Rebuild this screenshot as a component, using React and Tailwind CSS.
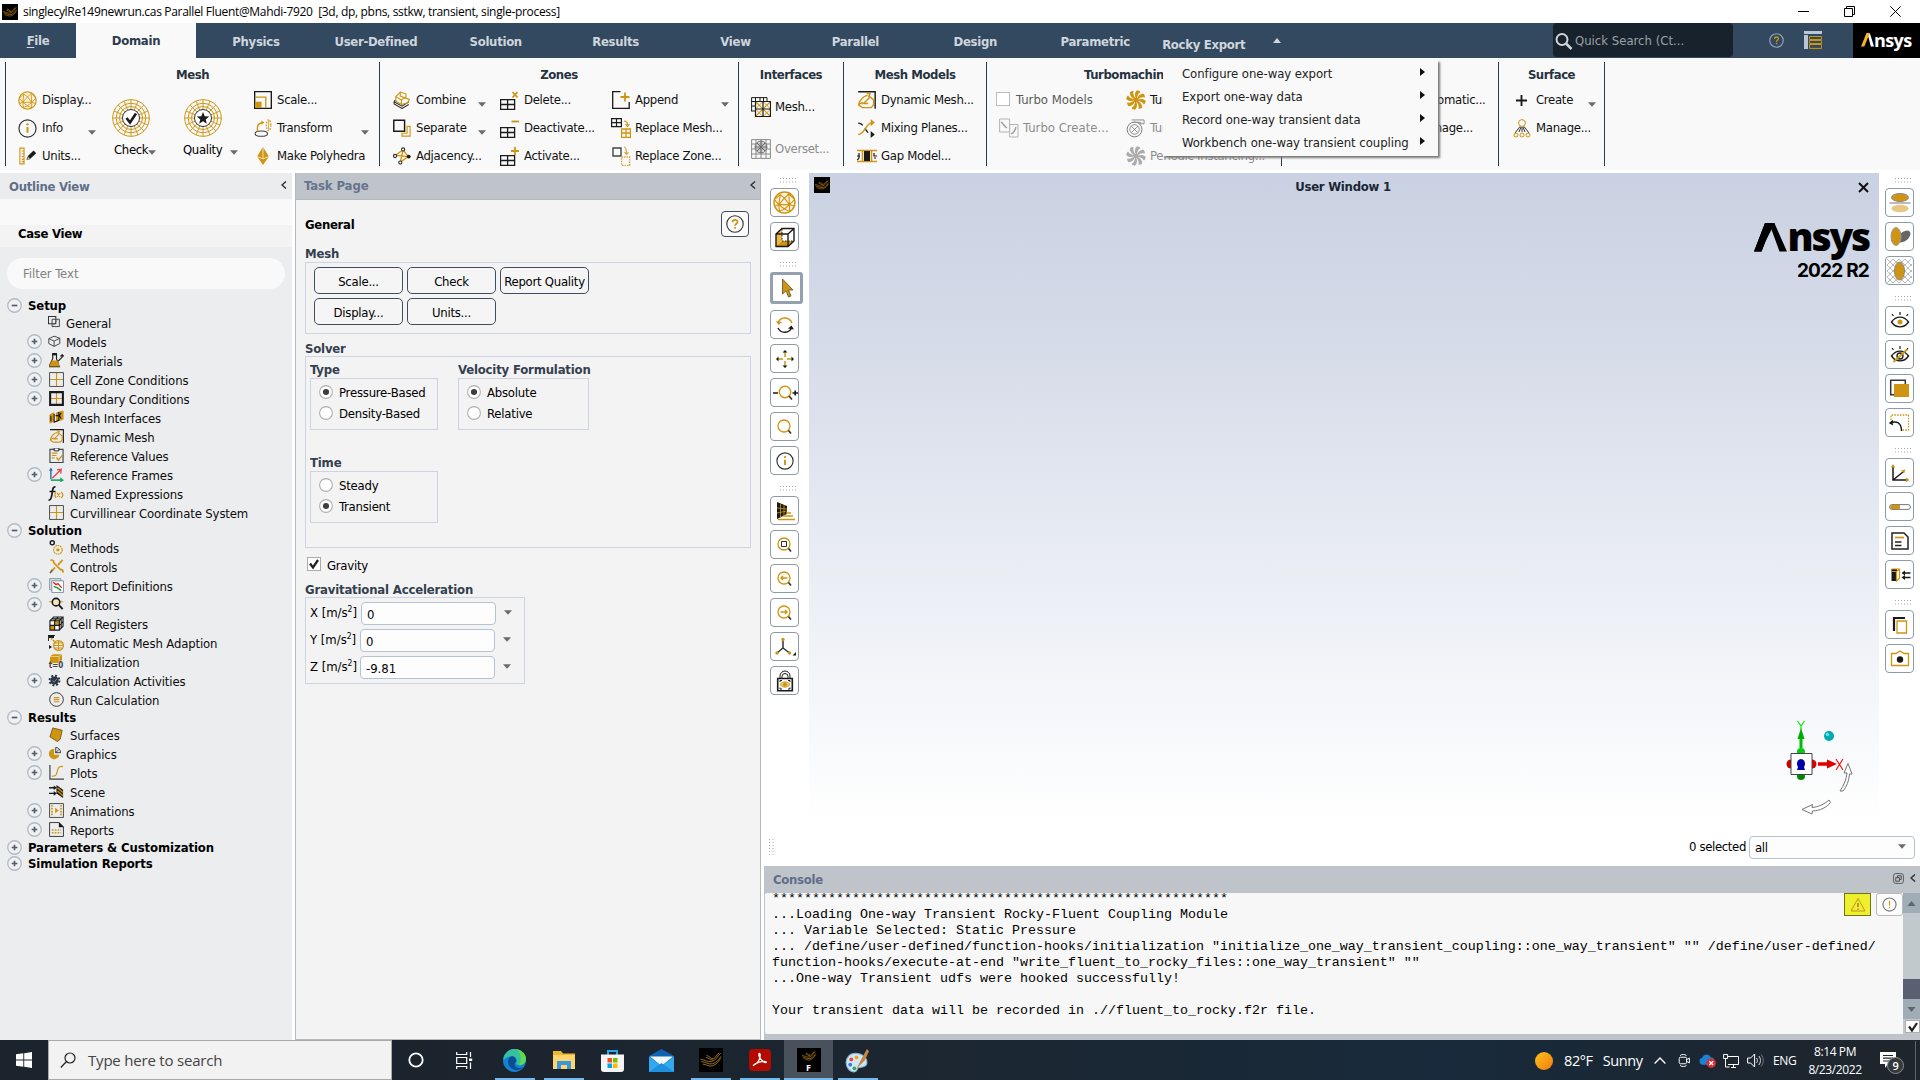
import React from 'react';

const G = '#cf9411';
const K = '#1a1a1a';
const TAHOMA = "font-['DejaVu_Sans_Condensed','DejaVu_Sans',sans-serif]";

function S({ w = 16, h = w, vb = '0 0 16 16', className = '', children }) {
  return (
    <svg width={w} height={h} viewBox={vb} fill="none" className={'shrink-0 ' + className}>
      {children}
    </svg>
  );
}

function Caret({ className = '' }) {
  return (
    <S w={8} h={5} vb="0 0 8 5" className={className}>
      <path d="M0 .3h8L4 4.8z" fill="#6b6b6b" />
    </S>
  );
}

function Swirl({ w = 16, color = '#c58c18' }) {
  return (
    <S w={w} h={w}>
      <rect width="16" height="16" fill="#000" />
      <path d="M1 7.500c3 .2 4.500 2.200 7.500 1.500S12.500 5 14.500 3.500M1.500 9c3 .2 4.500 2.200 7.500 1.500s4.500-3.500 5.800-5M2.500 10.700c2.500.2 4 1.900 6.500 1.200s4.500-3.500 5.500-5M5 5c2 .2 3 2.500 4.500 2.200s2.500-3 4-4M4.500 6.200c2 .3 3 2 4.700 1.700" stroke={color} strokeWidth=".6" />
    </S>
  );
}

/* ---------- ribbon icons ---------- */
const Ball = ({ w = 19 }) => (
  <S w={w}>
    <circle cx="8" cy="8" r="7.300" stroke={G} strokeWidth="1" fill="#fbf3df" />
    <path d="M1 6l4-3.500 3 2.500 3-3 4 4M1 6l3 3.500L8 5l3.500 4.500L15 6M1.500 10.500L4 9.500l4 3 3.500-3 3 1M4 9.500L4.500 14 8 12.500l3.500 1.700V9.500H4zM5 2.500L4 9.500M11 2l.5 7.500" stroke={G} strokeWidth=".75" />
  </S>
);
const Info = ({ w = 19 }) => (
  <S w={w}>
    <circle cx="8" cy="8" r="7.200" stroke="#333" strokeWidth="1" />
    <path d="M8 6.800v4.800" stroke={G} strokeWidth="1.700" />
    <circle cx="8" cy="4.500" r="1" fill={G} />
  </S>
);
const Units = () => (
  <S w={18}>
    <path d="M.8 1h3.700v14H.8zM2.500 3.500h2M2.500 6h2M2.500 8.500h2M2.500 11h2M2.500 13h2" stroke={G} />
    <path d="M7.500 10.500l.8-3L13 3.200l2.300 2.300-4.800 4.600z" fill={K} />
    <path d="M7 11l3-.5-2-2z" stroke={K} fill="#fff" strokeWidth=".6" />
  </S>
);
const Wheel = ({ kind }) => (
  <S w={38} vb="0 0 38 38">
    <g stroke={G}>
      <circle cx="19" cy="19" r="18.300" />
      <circle cx="19" cy="19" r="14.800" />
      <circle cx="19" cy="19" r="11.500" />
      <path d="M19 .5v37M.5 19h37M6 6l26 26M32 6L6 32M12 2l14 34M26 2L12 36M2 12l34 14M2 26l34-14" strokeWidth=".9" />
    </g>
    <circle cx="19" cy="19" r="8.500" fill="#fff" stroke="#333" />
    {kind === 'check' ? (
      <path d="M14.500 19l3.500 4.500 6-9" stroke={K} strokeWidth="2.600" />
    ) : (
      <path d="M19 13l1.700 4.300 4.500.2-3.500 2.900 1.200 4.400L19 22.300l-3.900 2.500 1.200-4.400-3.500-2.900 4.500-.2z" fill={K} />
    )}
  </S>
);
const Scale = () => (
  <S w={18}>
    <path d="M.6.6h14.800v14.800H.6z" stroke={K} strokeWidth="1.200" />
    <path d="M1.200 5.500h9.300v9.500" stroke={G} strokeWidth="1.200" />
    <path d="M1.200 9.500h5.500v5.500H1.200z" fill={G} />
  </S>
);
const Transform = () => (
  <S w={18}>
    <ellipse cx="6.500" cy="13" rx="5.500" ry="2.300" stroke="#444" />
    <path d="M3 11V8.500C3 5 4.500 3.500 7.500 3.300" stroke={G} strokeWidth="1.200" />
    <path d="M6.500 1.300l2.800 1.900-2.600 2z" fill={G} />
    <ellipse cx="13" cy="5.500" rx="2" ry="4.800" stroke={G} strokeDasharray="1.500 1" />
    <path d="M13 1v9" stroke={G} strokeWidth=".7" />
  </S>
);
const Poly = () => (
  <S w={18}>
    <path d="M8 0l5.300 8.500L8 16 2.700 8.500z" fill={G} />
    <path d="M8 0v10.500M2.700 8.500L8 10.500l5.300-2" stroke="#fff" strokeWidth=".6" />
  </S>
);
const Combine = () => (
  <S w={18}>
    <path d="M1 9v2.500L8 15.500l6-3.500M1 9l2-1M1 9.500l7 4 6-4" stroke="#333" />
    <path d="M2.500 5v4l5 3V8zM2.500 5l4-4 5 1.500V6.500l3 1-1.500 3-5.500 1.500M7.500 8l4-3M7.500 8l-5-3M6.500 1v3.500l5 2" stroke={G} fill="#fff" fillOpacity=".6" />
  </S>
);
const Separate = () => (
  <S w={18}>
    <path d="M.7 1.200h9.600v9.600H.7z" stroke={K} strokeWidth="1.300" />
    <path d="M12.500 6.500h2.700v8.700H8v-2.500h4.500z" stroke={G} />
  </S>
);
const Adjacency = () => (
  <S w={18}>
    <path d="M9 2.500L6.500 13.500M2 7.500l11.500 1M9 2.500l4.500 6-7 5M2 7.500l7-5" stroke={G} strokeWidth="1.200" />
    <circle cx="9" cy="2.200" r="1.400" stroke="#333" fill="#fff" />
    <circle cx="1.800" cy="8" r="1.400" stroke="#333" fill="#fff" />
    <circle cx="6.500" cy="13.800" r="1.400" stroke="#333" fill="#fff" />
    <circle cx="14" cy="8.500" r="1.700" fill={K} />
  </S>
);
const ZoneGrid = ({ kind }) => (
  <S w={19} vb="0 0 19 19">
    <path d="M.6 8.600h14v9.800h-14zM7.600 8.600v9.800M.6 13.500h14" stroke={K} strokeWidth="1.300" />
    {kind === 'x' && <path d="M12.500 1l5 5.500M17.500 1l-5 5.500" stroke={G} strokeWidth="1.800" />}
    {kind === '-' && <path d="M11.500 2.500h7.500" stroke={G} strokeWidth="1.800" />}
    {kind === '+' && <path d="M11 4h8M15 0v8" stroke={G} strokeWidth="1.800" />}
  </S>
);
const Append = () => (
  <S w={18} vb="0 0 18 18">
    <path d="M8.500.7H.7v16.600h16.500V11" stroke={K} strokeWidth="1.300" />
    <path d="M13 1.500v9M8.500 6h9" stroke={G} strokeWidth="1.800" />
  </S>
);
const ReplaceMesh = () => (
  <S w={20} vb="0 0 20 20">
    <path d="M.6.6h9.800v8H.6zM5.500.6v8M.6 4.600h9.800" stroke={K} strokeWidth="1.200" />
    <path d="M10.600 11h8.800v8.400h-8.800zM15 11v8.400M10.600 15h8.800" stroke={G} strokeWidth="1.300" />
    <path d="M13 3c2.500 0 3.500 1.500 3.500 4M14.500 6l2 2.500 2-2.500" stroke={G} strokeWidth="1.200" />
  </S>
);
const ReplaceZone = () => (
  <S w={20} vb="0 0 20 20" className="opacity-80">
    <path d="M2 2h8v8H2z" stroke={K} strokeWidth="1.400" />
    <path d="M10.600 11h8v8.400h-8z" stroke={G} strokeWidth="1.500" strokeDasharray="1.500 1" />
    <path d="M13 1c2 0 2.500 1.500 2.500 7M13.500 6l2 2.500 2-2.500" stroke={G} strokeWidth="1.200" />
  </S>
);
const IfMesh = () => (
  <S w={20} vb="0 0 20 20">
    <path d="M.6 14V.6H16V4M.6 4.500H4M.6 9H4M4.500.6V4M9 .6V4M12.500.6V4M0 14h4" stroke={K} />
    <path d="M4.500 4.500l15 15M19.500 4.500l-15 15" stroke={G} strokeWidth="1.200" />
    <path d="M4.500 12L12 4.500l7.500 7.500-7.500 7.500z" stroke={G} strokeWidth=".9" />
    <path d="M4.500 4.500h15v15h-15zM12 4.500v15M4.500 12h15" stroke={K} strokeWidth="1.200" />
  </S>
);
const Overset = () => (
  <S w={20} vb="0 0 20 20">
    <path d="M.6.6h18.800v18.800H.6zM5 .6v19M10 .6v19M15 .6v19M.6 5h19M.6 10h19M.6 15h19" stroke="#8a8a8a" />
    <circle cx="10" cy="8" r="6" stroke="#777" fill="#bbb" fillOpacity=".6" />
    <path d="M4 8h12M10 2v12M6 4l8 8M14 4l-8 8" stroke="#666" />
  </S>
);
const Dynamic = ({ w = 19 }) => (
  <S w={w}>
    <path d="M1 .7h14.300V15" stroke={K} strokeWidth="1.200" />
    <path d="M1.500 11c1-3.500 3-6 7.500-7.500M8 1.500l3 1-1.500 2.700M1 11.500L4.500 14H12l2-2.500V7.500L11 5 5.500 10.500h4M1 11.500l4-2" stroke={G} strokeWidth="1.200" />
  </S>
);
const Mixing = () => (
  <S w={19}>
    <path d="M1 3.500c6 0 6 9.500 12 9.500" stroke={K} strokeWidth="1.100" strokeDasharray="4.500 3" />
    <path d="M1 13c6 0 6-9.800 12-9.800" stroke={G} strokeWidth="1.200" />
    <path d="M11.500 0l3.500 3-3.500 3z" fill={G} />
    <path d="M11.500 10l3.500 3-3.500 3z" fill={K} />
  </S>
);
const Gap = () => (
  <S w={20} h={14} vb="0 0 20 14">
    <path d="M0 1.500h20M0 12.500h20" stroke={G} strokeWidth="1.600" />
    <path d="M7 2h6v10H7z" fill={K} />
    <path d="M5.500 2v10M14.500 2v10" stroke={G} strokeWidth="1.500" />
    <path d="M0 7h3M2 4v5c0 1-2 2-2 2M20 7h-3V4M17 9h2" stroke={K} strokeWidth="1.200" />
  </S>
);
const TurboCreate = () => (
  <S w={20} vb="0 0 20 20">
    <path d="M.6 1h10v13H.6zM10.600 6.500H19V19h-8.400z" stroke="#b3b3b3" />
    <path d="M2 4c2 1 2 3 6 6M12 16c3-1 4-3 5-7" stroke="#9a9a9a" strokeWidth="1.300" />
  </S>
);
const Fan = ({ color = G }) => (
  <S w={20} vb="0 0 20 20">
    {[0, 45, 90, 135, 180, 225, 270, 315].map((a) => (
      <path key={a} d="M10 8.500C8.500 6 8.500 2.500 11 .3c2 .2 3 1 3.500 1.700C12 3.500 11.200 5.500 11 8.500z" fill={color} transform={`rotate(${a} 10 10)`} />
    ))}
    <circle cx="10" cy="10" r="2.200" fill={color} />
  </S>
);
const TurboWheel = () => (
  <S w={19} vb="0 0 20 20">
    <circle cx="9" cy="11" r="7.800" stroke="#777" />
    <circle cx="9" cy="11" r="5" stroke="#888" />
    <path d="M6 1h13v4h-5M8 3.500h8M5.500 7.500l7 7M12.500 7.500l-7 7" stroke="#888" />
  </S>
);
const SurfManage = () => (
  <S w={18} h={19} vb="0 0 18 19">
    <circle cx="9" cy="4" r="3.400" stroke={G} />
    <path d="M9 8v5M7 7.500L2 14M11 7.500l5 6.500M8 8l-2 5M10 8l2 5" stroke={K} strokeWidth=".9" />
    <circle cx="3" cy="16" r="2" stroke={G} />
    <circle cx="9" cy="16" r="2" stroke={G} />
    <circle cx="15" cy="16" r="2" stroke={G} />
  </S>
);

function Item({ icon, label, caret, dim, gap = 'ml-[5px]', box = 'w-[19px]' }) {
  return (
    <div className={'flex h-7 items-center text-[13px] tracking-[-0.3px] whitespace-nowrap ' + (dim ? 'text-[#8c8c8c]' : 'text-[#111]')}>
      {icon && <span className={'flex shrink-0 justify-center ' + box}>{icon}</span>}
      <span className={gap}>{label}</span>
      {caret && <Caret className="mt-2 ml-auto" />}
    </div>
  );
}

function Group({ title, width, children }) {
  return (
    <section className={'mt-1 h-[104px] shrink-0 border-r border-[#2c3a4a] ' + width}>
      <h3 className="h-[24px] pt-[3px] text-center text-[13px] leading-[19px] font-bold tracking-[-0.45px] whitespace-nowrap text-[#26323f]">{title}</h3>
      <div className="flex">{children}</div>
    </section>
  );
}

function Ribbon() {
  return (
    <div className="relative flex h-[112px] bg-[#f9f9f9] pl-[5px]">
      <div className="mt-1 h-[104px] w-px bg-[#2c3a4a]" />
      <Group title="Mesh" width="w-[374px]">
        <div className="ml-3 w-[78px]">
          <Item icon={<Ball />} label="Display..." />
          <Item icon={<Info />} label="Info" caret />
          <Item icon={<Units />} label="Units..." />
        </div>
        <div className="ml-[2px] w-[66px] pt-[13px] text-[13px] tracking-[-0.35px]">
          <div className="flex justify-center"><Wheel kind="check" /></div>
          <div className="mt-[3px] flex items-center pl-4 leading-5"><span>Check</span><Caret className="mt-1" /></div>
        </div>
        <div className="w-[78px] pt-[13px] text-[13px] tracking-[-0.35px]">
          <div className="flex justify-center"><Wheel kind="star" /></div>
          <div className="mt-[3px] flex items-center pr-1 pl-[19px] leading-5"><span>Quality</span><Caret className="mt-1 ml-auto" /></div>
        </div>
        <div className="ml-[11px] w-[116px]">
          <Item icon={<Scale />} label="Scale..." />
          <Item icon={<Transform />} label="Transform" caret />
          <Item icon={<Poly />} label="Make Polyhedra" />
        </div>
      </Group>
      <Group title="Zones" width="w-[359px]">
        <div className="ml-[12px] w-[94px]">
          <Item icon={<Combine />} label="Combine" caret />
          <Item icon={<Separate />} label="Separate" caret />
          <Item icon={<Adjacency />} label="Adjacency..." />
        </div>
        <div className="ml-[14px] w-[100px]">
          <Item icon={<ZoneGrid kind="x" />} label="Delete..." />
          <Item icon={<ZoneGrid kind="-" />} label="Deactivate..." />
          <Item icon={<ZoneGrid kind="+" />} label="Activate..." />
        </div>
        <div className="ml-[11px] w-[118px]">
          <Item icon={<Append />} label="Append" caret />
          <Item icon={<ReplaceMesh />} label="Replace Mesh..." />
          <Item icon={<ReplaceZone />} label="Replace Zone..." />
        </div>
      </Group>
      <Group title="Interfaces" width="w-[105px]">
        <div className="ml-3 pt-[7px]">
          <Item icon={<IfMesh />} label="Mesh..." />
          <div className="h-[14px]" />
          <Item icon={<Overset />} label="Overset..." dim />
        </div>
      </Group>
      <Group title="Mesh Models" width="w-[143px]">
        <div className="ml-[13px]">
          <Item icon={<Dynamic />} label="Dynamic Mesh..." />
          <Item icon={<Mixing />} label="Mixing Planes..." />
          <Item icon={<Gap />} label="Gap Model..." />
        </div>
      </Group>
      <Group title="Turbomachinery" width="w-[295px]">
        <div className="ml-[9px] w-[130px]">
          <div className="flex h-7 items-center text-[13px] text-[#5a5a5a]">
            <span className="mb-[2px] h-[14px] w-[14px] border border-[#bcbcbc] bg-white" />
            <span className="ml-[6px]">Turbo Models</span>
          </div>
          <div className="flex h-7 items-center pl-[3px] text-[13px] text-[#8c8c8c]"><TurboCreate /><span className="ml-1">Turbo Create...</span></div>
        </div>
        <div>
          <Item icon={<Fan />} label="Turbo Topology..." />
          <Item icon={<TurboWheel />} label="Turbo Query..." dim />
          <Item icon={<Fan color="#ababab" />} label="Periodic Instancing..." dim />
        </div>
      </Group>
      <Group title="Adapt" width="w-[217px]">
        <div className="ml-[112px]">
          <Item icon={<Ball />} label="Automatic..." />
          <Item icon={<Ball />} label="Manage..." />
        </div>
      </Group>
      <Group title="Surface" width="w-[106px]">
        <div className="ml-[13px] w-[84px]">
          <Item icon={<S w={11} vb="0 0 10 10"><path d="M5 0v10M0 5h10" stroke={K} strokeWidth="1.700" /></S>} label="Create" caret />
          <Item icon={<SurfManage />} label="Manage..." />
        </div>
      </Group>
      <div className="absolute top-[2px] left-[1163px] z-10 flex h-[96px] w-[275px] flex-col bg-[#f9f9f9] pt-[2px] shadow-[2px_2px_2px_#777] [clip-path:inset(0_-6px_-6px_0)]">
        {['Configure one-way export', 'Export one-way data', 'Record one-way transient data', 'Workbench one-way transient coupling'].map((t) => (
          <div key={t} className="flex h-[23px] items-center pr-[13px] pl-[19px] text-[13px] tracking-[-0.05px] whitespace-nowrap text-[#222]">
            {t}
            <S w={5} h={8} vb="0 0 5 8" className="mb-[3px] ml-auto"><path d="M0 0l5 4-5 4z" fill="#111" /></S>
          </div>
        ))}
      </div>
    </div>
  );
}

/* ---------- header ---------- */
function Header() {
  const tabs = ['Physics', 'User-Defined', 'Solution', 'Results', 'View', 'Parallel', 'Design', 'Parametric'];
  return (
    <>
      <div className="flex h-[23px] items-center bg-white pl-[2px] font-['Open_Sans',sans-serif] text-[12px] text-black">
        <Swirl />
        <span className="ml-[5px] tracking-[-0.32px] whitespace-pre">{'singlecylRe149newrun.cas Parallel Fluent@Mahdi-7920  [3d, dp, pbns, sstkw, transient, single-process]'}</span>
        <div className="ml-auto flex items-center gap-[35px] pr-[19px]">
          <S w={11} vb="0 0 11 11"><path d="M0 5.500h11" stroke="#000" /></S>
          <S w={11} vb="0 0 11 11"><path d="M.5 2.500h8v8h-8zM2.500 2.500v-2h8v8h-2" stroke="#000" /></S>
          <S w={11} vb="0 0 11 11"><path d="M.3.300l10.400 10.400M10.700.3L.3 10.700" stroke="#000" /></S>
        </div>
      </div>
      <div className="flex h-[35px] bg-[#334960] text-[13px] font-bold tracking-[-0.3px] text-[#cfd5dc]">
        <div className="flex w-[76px] items-center justify-center pt-[1px]"><span className="underline-offset-2"><u>F</u>ile</span></div>
        <div className="flex w-[120px] items-center justify-center bg-[#f9f9f9] pt-[1px] text-[#2b3b4c]">Domain</div>
        {tabs.map((t) => (
          <div key={t} className="flex w-[119.9px] items-center justify-center pt-[3px]">{t}</div>
        ))}
        <div className="flex w-[110px] items-center pt-[8px] pl-[7px] whitespace-nowrap">Rocky Export</div>
        <S w={8} h={5} vb="0 0 8 5" className="mt-[15px] ml-[8px]"><path d="M0 5h8L4 0z" fill="#cfd5dc" /></S>
        <div className="ml-auto flex h-[34px] w-[180px] items-center rounded-[4px] bg-[#18222d] pt-px pl-[2px] text-[13px] font-normal tracking-normal text-[#9aa1a8]">
          <S w={18} vb="0 0 18 18"><circle cx="7" cy="7.500" r="5.500" stroke="#cfd5dc" strokeWidth="2" /><path d="M11 11.500l5.500 5.500" stroke="#cfd5dc" strokeWidth="2.500" /></S>
          <span className="ml-[2px]">Quick Search (Ct...</span>
        </div>
        <S w={15} className="mt-[10px] ml-[36px]"><circle cx="8" cy="8" r="7.200" stroke="#8fa0b2" strokeWidth="1.300" /><path d="M6 6.300c0-2.800 4-2.600 4-.2 0 1.600-2 1.500-2 3.200M8 10.500v1.500" stroke={G} strokeWidth="1.400" /></S>
        <S w={18} vb="0 0 18 18" className="mt-[8px] ml-[20px]"><path d="M0 0h18v3H0zM0 4h4v14H0z" fill="#b9c6d3" /><path d="M5.600 5.500h12v3h-12zM5.600 9.500h12v3h-12zM5.600 13.500h12v3.900h-12z" stroke={G} /></S>
        <div className="ml-[31px] flex w-[67px] items-center bg-black pl-[8px] font-['Open_Sans',sans-serif] text-[18px] leading-none tracking-[-0.6px] text-white">
          <S w={13} h={14} vb="0 0 13 14" className="mb-[1px]"><path d="M0 13.500L5.500 0h3.300L3.300 13.500z" fill="#f9b31c" /><path d="M7.300 3.500L8.800 0l4.200 13.500H9.800z" fill="#fff" /></S>
          <span className="mb-[2px]">nsys</span>
        </div>
      </div>
    </>
  );
}

/* ---------- outline tree ---------- */
const g = (children, w = 15) => <S w={w}>{children}</S>;
const TREE_ICONS = {
  General: g(<><path d="M.6.600h9v9h-9z" stroke="#333" strokeWidth="1.300" /><path d="M5 4h9v9H5z" stroke="#444" strokeWidth="1.200" /><path d="M6.500 11.500L11 5.500" stroke="#555" /></>, 13),
  Models: g(<><path d="M1 4.500L7.500 1.500 14.500 4v6.500L7.500 14 1 10.500zM1 4.500l6.500 3L14.500 4M7.500 7.500V14" stroke="#444" strokeWidth="1.200" /></>, 13),
  Materials: g(<><path d="M4 1h4v5l3 8.500H0L4 6z" stroke={K} strokeWidth="1.200" /><path d="M3 8h6l2.500 6.500H0z" fill={G} /><path d="M3.500 0h5v2.500h-5z" fill={K} /><path d="M9.500 9l4-4M14 1v4M12 3h4" stroke={K} strokeWidth="1.300" /></>),
  Cell: g(<><path d="M8 1v14M1 8h14" stroke={G} strokeWidth="1.200" /><path d="M.6.600h14.800v14.800H.6z" stroke="#444" /></>),
  Boundary: g(<><path d="M8 1v14M1 8h14" stroke={G} strokeWidth="1.200" /><path d="M1.200 1.200h13.600v13.600H1.200z" stroke={K} strokeWidth="2.200" /></>),
  Interfaces: g(<><path d="M1 5l4-2v9l-4 2zM8 3l7-2v9l-7 2z" fill={G} stroke={G} /><path d="M2 6v6M5.500 4v9l5-2V2M7 6h3M13 3l-2 3 2 3" stroke={K} strokeWidth="1.200" /></>),
  Dynamic: <Dynamic w={15} />,
  RefValues: g(<><path d="M1 1.500h14v14H1z" stroke="#444" strokeWidth="1.200" /><path d="M5.500 0h5v3h-5z" fill="#fff" stroke={K} /><path d="M3 5.500h6M3 8h5M3 10.500h3M8 10l2 3 4-5" stroke={G} strokeWidth="1.300" /></>),
  Frames: g(<><path d="M2 2v11" stroke="#1d6fb8" strokeWidth="1.500" /><path d="M0 4l2-3.500L4 4z" fill="#1d6fb8" /><path d="M2 14h11" stroke="#18a558" strokeWidth="1.700" /><path d="M12 11l4 3-4 2.500z" fill="#18a558" /><path d="M3.500 12L12 3.500M8.500 3l4.500-.5-.5 4.500" stroke="#e8424b" strokeWidth="1.400" /></>),
  Expr: g(<><path d="M7.500 1C5 .5 4.800 3 4.300 6S3.500 14.500.5 14M1.500 5.500h6" stroke={K} strokeWidth="1.700" /><path d="M8 6c-1.500 2-1.500 4 0 6M9 7l3 4M12 7l-3 4M13 6c2.500 2 2.500 4 0 6" stroke={G} strokeWidth="1.200" /></>, 16),
  Methods: g(<><circle cx="3.500" cy="3" r="2.200" stroke={K} strokeWidth="1.500" /><circle cx="9.500" cy="10.500" r="4.600" stroke={G} strokeWidth="1.200" strokeDasharray="2 .6" /><circle cx="9.500" cy="10.500" r="1.800" fill={G} /></>),
  Controls: g(<><path d="M1.500 1.500c2-1 4 0 3.500 2.500l7.500 7.500c2-.5 3 1.500 2 3M14.500 1l-5 5.500M6.500 9L1.500 14.500" stroke={G} strokeWidth="1.800" /><path d="M3.500 11.500L1 15" stroke="#666" strokeWidth="1.500" /></>),
  RepDef: g(<><path d="M.6.600h12v12H.6z" fill="#d4dbe2" stroke="#8899a8" /><path d="M3 3h12.400v12.400H3z" fill="#fff" stroke="#7d8d9c" /><path d="M4.500 4.500l3 2.500 2-1 4 4.500" stroke="#e22" strokeWidth="1.500" /><path d="M5 9l4 1.500 4 3" stroke="#1a9a3a" strokeWidth="1.500" /></>),
  Monitors: g(<><path d="M0 5h16" stroke={G} strokeWidth="1.200" strokeDasharray="3 1" /><circle cx="7.500" cy="5.500" r="4" fill="#f5e6bf" stroke={K} strokeWidth="1.700" /><path d="M10.500 8.500l4 4.500" stroke={K} strokeWidth="2" /></>),
  Registers: g(<><path d="M1 5h10v10H1z" fill={G} /><path d="M1 5h5v5H1zM6 10h5v5H6z" fill="#fff" /><path d="M1 5l4-4h10v10l-4 4H1zM1 5h10v10M11 5l4-4M6 5v10M1 10h10l4-4M3 3h10v10M6 5l4-4" stroke={K} strokeWidth="1.200" /></>),
  Adaption: g(<><path d="M0 0h7M0 0v6M1 2h5" stroke={K} strokeWidth="1.800" /><path d="M3 3l5 5" stroke={G} strokeWidth="1.600" strokeDasharray="2 .8" /><circle cx="10.500" cy="10.500" r="4.900" stroke={G} strokeWidth="1.200" /><path d="M6 10.500h9M10.500 6v9M7 8h7M7 13h7" stroke={G} /><path d="M1 10l3 2-3 2z" fill={K} /></>, 16),
  Init: (
    <span className="flex flex-col items-center">
      <S w={12} h={9} vb="0 0 12 9"><path d="M0 2.500L3 .300h9V6L9 9H0z" fill={G} /><path d="M0 2.500h9V9M9 2.500L12 .3" stroke="#f5e0a8" strokeWidth=".7" /></S>
      <span className="text-[8px] leading-[6px] font-bold tracking-normal text-[#444]">t=0</span>
    </span>
  ),
  CalcAct: g(<><circle cx="8" cy="8" r="5" fill="#2d3742" /><circle cx="8" cy="8" r="6" stroke="#2d3742" strokeWidth="2.500" strokeDasharray="2.400 2.300" /><path d="M5.500 8l2 2 3.500-4" stroke="#8b99a8" /></>, 13),
  Run: g(<><circle cx="8" cy="8" r="7.300" stroke="#333" /><path d="M5 6h6M5 8.200h6M5 10.400h6" stroke={G} strokeWidth="1.300" /></>),
  Surfaces: g(<><path d="M4 1l10 2.500-2 9.500-3 2.500L1 10.500z" fill={G} stroke="#7a5a14" /></>),
  Graphics: g(<><path d="M7.500 2A6.500 6.500 0 1 0 14 9.500H7.500z" fill={G} /><path d="M9.500.5v6.500h6C15.300 3.500 13 .8 9.500.5zM9.500 7l4-4" stroke={K} /></>, 13),
  Plots: g(<><path d="M1 0v15h15" stroke="#444" strokeWidth="1.300" /><path d="M3 12c5 0 5-2 6-6s2-4.500 6-4.500" stroke={G} strokeWidth="1.300" /></>),
  Scene: g(<><path d="M0 4h6M0 10h6" stroke={K} strokeWidth="1.500" /><path d="M5 1.500L8.500 4 5 6.500zM5 7.500L8.500 10 5 12.500z" fill={K} /><path d="M8 1l7 5v9l-7-5z" fill={K} /><path d="M9 4l6 5M9 7.500l6 5" stroke={G} strokeWidth="1.500" /></>),
  Anim: g(<><path d="M.6.600h14.800v14.800H.6z" stroke="#444" /><path d="M3.200 2v12M12.800 2v12" stroke={G} strokeWidth="1.800" strokeDasharray="1.800 1.300" /><path d="M6.500 5l4 3-4 3z" fill={G} /></>),
  Reports: g(<><path d="M.6.600h10l4.800 4.500v10.300H.6z" stroke="#333" /><path d="M10.500 0v5.500H16z" fill={K} /><path d="M3 8.500h10M3 11.500h10" stroke={G} strokeWidth="1.500" strokeDasharray="1.800 1.300" /></>),
};

const TREE = [
  ['-', 'Setup', [
    ['', 'General', 'General', 1], ['+', 'Models', 'Models', 1], ['+', 'Materials', 'Materials'], ['+', 'Cell Zone Conditions', 'Cell'],
    ['+', 'Boundary Conditions', 'Boundary'], ['', 'Mesh Interfaces', 'Interfaces'], ['', 'Dynamic Mesh', 'Dynamic'], ['', 'Reference Values', 'RefValues'],
    ['+', 'Reference Frames', 'Frames'], ['', 'Named Expressions', 'Expr'], ['', 'Curvillinear Coordinate System', 'Cell'],
  ]],
  ['-', 'Solution', [
    ['', 'Methods', 'Methods'], ['', 'Controls', 'Controls'], ['+', 'Report Definitions', 'RepDef'], ['+', 'Monitors', 'Monitors'],
    ['', 'Cell Registers', 'Registers'], ['', 'Automatic Mesh Adaption', 'Adaption'], ['', 'Initialization', 'Init'],
    ['+', 'Calculation Activities', 'CalcAct', 1], ['', 'Run Calculation', 'Run'],
  ]],
  ['-', 'Results', [
    ['', 'Surfaces', 'Surfaces'], ['+', 'Graphics', 'Graphics', 1], ['+', 'Plots', 'Plots'], ['', 'Scene', 'Scene'], ['+', 'Animations', 'Anim'], ['+', 'Reports', 'Reports'],
  ]],
  ['+', 'Parameters & Customization', []],
  ['+', 'Simulation Reports', []],
];

function Toggle({ kind, w = 15 }) {
  if (!kind) return <span className="w-[15px] shrink-0" />;
  return (
    <S w={w}>
      <circle cx="8" cy="8" r="7.200" stroke="#b3bbc4" strokeWidth="1.400" fill="#f0f1f3" />
      <path d={kind === '+' ? 'M8 5v6M5 8h6' : 'M5 8h6'} stroke="#555d6b" strokeWidth="1.800" />
    </S>
  );
}

function Outline() {
  return (
    <aside className="flex w-[292px] shrink-0 flex-col bg-[#ecedef]">
      <div className="flex h-[26px] items-center bg-[#ebeced] pt-px pr-[5px] pl-[9px] text-[13px] font-bold tracking-[-0.28px] text-[#5f6f88]">
        Outline View
        <S w={6} h={8} vb="0 0 6 8" className="mb-[3px] ml-auto"><path d="M5 .5L1 4l4 3.500" stroke="#333" strokeWidth="1.500" /></S>
      </div>
      <div className="h-[26px] bg-[#f9f9f9]" />
      <div className="flex h-[22px] items-center bg-[#f3f3f4] pb-[5px] pl-[18px] text-[13px] font-bold tracking-[-0.3px] text-black">Case View</div>
      <div className="mt-[11px] ml-[7px] flex h-[31px] w-[278px] items-center rounded-full bg-[#f9f9f9] pt-px pl-4 text-[13px] tracking-[-0.05px] text-[#808080]">Filter Text</div>
      <ul className="mt-[8px]">
        {TREE.map(([k, label, kids]) => (
          <li key={label}>
            <div className="flex h-4 items-center pl-[7px] text-[13px] font-bold tracking-[-0.11px] text-black">
              <Toggle kind={k} />
              <span className="mt-[2px] ml-[6px]">{label}</span>
            </div>
            <ul>
              {kids.map(([kk, l, ic, narrow]) => (
                <li key={l} className="flex h-[19px] items-center pl-[27px] text-[13px] tracking-[-0.13px] whitespace-nowrap text-[#0c0c0c]">
                  <Toggle kind={kk} />
                  <span className={'ml-[6px] flex shrink-0 justify-center ' + (narrow ? 'w-[12px]' : 'w-[16px]')}>{TREE_ICONS[ic]}</span>
                  <span className="mt-[2px] ml-[6px]">{l}</span>
                </li>
              ))}
            </ul>
          </li>
        ))}
      </ul>
    </aside>
  );
}

/* ---------- task page ---------- */
const Label = ({ children, className = '' }) => <div className={'text-[13px] leading-4 font-bold tracking-[-0.18px] text-[#33404f] ' + className}>{children}</div>;
const Btn = ({ children }) => (
  <button className="flex h-[27px] w-[89px] items-center justify-center rounded-[5px] border border-[#3f4d5f] bg-[#f5f5f5] pt-[2px] text-[13px] tracking-[-0.25px] whitespace-nowrap text-black">{children}</button>
);
const Radio = ({ on, children }) => (
  <div className="flex h-[21px] items-center text-[13px] tracking-[-0.22px] whitespace-nowrap text-black">
    <S w={14}><circle cx="8" cy="8" r="7.300" fill="#fff" stroke="#adadad" strokeWidth="1.200" />{on && <circle cx="8" cy="8" r="3.500" fill="#3d3d3d" />}</S>
    <span className="mt-[2px] ml-[6px]">{children}</span>
  </div>
);
const RadioBox = ({ width, a, b, sel }) => (
  <div className={'h-[52px] border border-[#cdd3e2] pt-[2px] pl-[8px] ' + width}>
    <Radio on={sel === 0}>{a}</Radio>
    <Radio on={sel === 1}>{b}</Radio>
  </div>
);

function TaskPage() {
  return (
    <main className="ml-[3px] flex w-[466px] shrink-0 flex-col border border-t-0 border-[#b5b9bd] bg-[#f3f3f3]">
      <div className="flex h-[27px] shrink-0 items-center border-b border-[#b2b7bc] bg-[#bfc4cb] pr-[4px] pl-2 text-[13px] font-bold tracking-[-0.1px] text-[#66748c]">
        Task Page
        <S w={6} h={8} vb="0 0 6 8" className="mb-[3px] ml-auto"><path d="M5 .5L1 4l4 3.500" stroke="#333" strokeWidth="1.500" /></S>
      </div>
      <div className="px-[9px]">
        <div className="mt-[11px] flex h-[27px] items-center justify-between pr-[2px] text-[13px] font-bold tracking-[-0.3px] text-black">
          General
          <span className="mb-[2px] flex h-[26px] w-[28px] items-center justify-center rounded-[4px] border border-[#3f4d5f] bg-[#fafafa]">
            <S w={18}><circle cx="8" cy="8" r="7.300" stroke="#333" /><path d="M5.800 6.500c0-3 4.500-2.800 4.500-.3 0 1.700-2.200 1.500-2.200 3.300M8.100 10.700v1.500" stroke={G} strokeWidth="1.500" /></S>
          </span>
        </div>
        <Label className="mt-[8px]">Mesh</Label>
        <div className="flex h-[72px] flex-col gap-1 border border-[#cdd3e2] pt-1 pl-[8px]">
          <div className="flex gap-1"><Btn>Scale...</Btn><Btn>Check</Btn><Btn>Report Quality</Btn></div>
          <div className="flex gap-1"><Btn>Display...</Btn><Btn>Units...</Btn></div>
        </div>
        <Label className="mt-[6px] pt-px leading-[15px]">Solver</Label>
        <div className="h-[192px] border border-[#cdd3e2] pt-[5px] pl-[4px]">
          <div className="flex gap-[20px]">
            <div><Label>Type</Label><RadioBox width="w-[128px]" a="Pressure-Based" b="Density-Based" sel={0} /></div>
            <div><Label className="whitespace-nowrap">Velocity Formulation</Label><RadioBox width="w-[131px]" a="Absolute" b="Relative" sel={0} /></div>
          </div>
          <Label className="mt-[25px]">Time</Label>
          <RadioBox width="w-[128px]" a="Steady" b="Transient" sel={1} />
        </div>
        <div className="mt-[7px] flex h-[18px] items-center pl-[2px] text-[13px] tracking-[-0.25px] text-black">
          <span className="flex h-[14px] w-[14px] items-center justify-center border border-[#ababab] bg-white"><S w={10} vb="0 0 10 10"><path d="M1 4.500l3 4L9 1" stroke="#222" strokeWidth="2.300" /></S></span>
          <span className="mt-[3px] ml-[6px]">Gravity</span>
        </div>
        <Label className="mt-[8px] pt-px leading-[15px]">Gravitational Acceleration</Label>
        <div className="flex h-[87px] w-[220px] flex-col gap-1 border border-[#cdd3e2] pt-1 pl-[4px]">
          {[['X', '0'], ['Y', '0'], ['Z', '-9.81']].map(([a, v]) => (
            <div key={a} className="flex h-[23px] items-center text-[13px] tracking-[-0.02px] text-black">
              <span className={'-mt-[2px] whitespace-nowrap ' + (a === 'X' ? 'w-[51px]' : 'w-[50px]')}>{a} [m/s<sup className="top-[-5px] text-[8.500px] leading-none">2</sup>]</span>
              <span className="flex h-[23px] w-[135px] items-center rounded-[4px] border border-[#b5c2d2] bg-[#fdfdfd] pt-[3px] pl-[5px]">{v}</span>
              <Caret className="mb-[3px] ml-[8px]" />
            </div>
          ))}
        </div>
      </div>
    </main>
  );
}

/* ---------- tool bars ---------- */
const Dots = () => (
  <div className="mt-[11px] mb-[5px] flex pl-[10px] first:mt-[5px]">
    <S w={16} h={5} vb="0 0 16 5"><path d="M0 .5h16M0 4h16" stroke="#a9a9a9" strokeDasharray="1 2" /></S>
  </div>
);
const Tool = ({ children }) => (
  <span className="flex h-[29px] w-[29px] shrink-0 items-center justify-center rounded-[4px] border border-[#8d9aa8] bg-white">{children}</span>
);
const M = (inner) => <S w={22} vb="0 0 22 22">{inner}</S>;
const lens = <><circle cx="10" cy="10" r="6" stroke={G} strokeWidth="1.300" /><path d="M14.500 14.500L17 17.500" stroke="#333" strokeWidth="1.700" /></>;

function LeftTools() {
  return (
    <div className="flex w-[48px] shrink-0 flex-col pl-[9px]">
      <Dots />
      <div className="flex flex-col gap-[5px]">
        <Tool><Ball w={23} /></Tool>
        <Tool>{M(<><path d="M2 8l6-5v12l-6 5z" fill="#f0b84a" /><path d="M2 20l6-5h12l-6 5z" fill={G} /><path d="M8 2.500h12V15H8z" fill="#fff" /><path d="M2 8l6-5.500h12V15l-6 5.500H2zM2 8h12v12.500M14 8l6-5.500" stroke={K} strokeWidth="1.400" /><path d="M8 3v12h12" stroke={K} strokeDasharray="1.500 1.500" /></>)}</Tool>
      </div>
      <Dots />
      <span className="flex h-[32px] w-[33px] shrink-0 items-center justify-center rounded-[3px] border-[3px] border-[#93a1ae] bg-white">
        {M(<path d="M6.500 2v15l3.500-3.200L12.500 20l2.500-1-2.500-6H17z" fill={G} stroke="#6b5a2a" strokeWidth=".9" />)}
      </span>
      <div className="mt-[6px] flex flex-col gap-[5px]">
        <Tool>{M(<><path d="M4 9c2-6.500 11-7 14 0" stroke={G} strokeWidth="1.500" /><path d="M2 7l2.500 4L8 8z" fill={G} /><path d="M4 14c3 6 11 5.500 14-.5" stroke={K} strokeWidth="1.400" /><path d="M20 15.500l-2.500-4L14 14.500z" fill={K} /></>)}</Tool>
        <Tool>{M(<><path d="M11 3v6M11 13v6M3 11h6M13 11h6" stroke={G} strokeWidth="1.500" /><path d="M8.500 4.500L11 2l2.500 2.500zM8.500 17.500L11 20l2.500-2.500zM4.500 8.500L2 11l2.500 2.500zM17.500 8.500L20 11l-2.500 2.500z" fill={K} /></>)}</Tool>
        <Tool><S w={26} h={22} vb="0 0 26 22"><circle cx="13" cy="10" r="5.700" stroke={G} strokeWidth="1.400" /><path d="M17 14l3 3.500" stroke="#333" strokeWidth="1.700" /><path d="M1 11h5M20.500 11H26M23.200 8.500v5" stroke={K} strokeWidth="1.700" /></S></Tool>
        <Tool>{M(lens)}</Tool>
        <Tool><Info w={18} /></Tool>
      </div>
      <Dots />
      <div className="flex flex-col gap-[5px]">
        <Tool>{M(<><path d="M3 2l10 4v8L3 19z" fill={K} /><path d="M3 8l10 1M3 13l10-2M6.500 3.500v14M10 5v11" stroke={G} strokeWidth=".8" /><path d="M12 13h5M9 16h10M4 19.500h17" stroke={G} strokeWidth="1.400" /></>)}</Tool>
        <Tool>{M(<>{lens}<path d="M7.500 7.500h5v5h-5z" stroke="#333" /></>)}</Tool>
        <Tool>{M(<>{lens}<path d="M7 10h6.500M9 8l-2 2 2 2" stroke={G} strokeWidth="1.400" /></>)}</Tool>
        <Tool>{M(<>{lens}<path d="M6.500 10H13M11 8l2 2-2 2" stroke={G} strokeWidth="1.400" /></>)}</Tool>
        <Tool>{M(<><path d="M9 4v8l-6 5M9 12l6.500 5" stroke="#333" strokeWidth="1.500" /><circle cx="9" cy="3.500" r="1.700" fill={G} /><circle cx="3" cy="17" r="1.700" fill={G} /><circle cx="15.500" cy="17" r="1.700" fill={G} /><path d="M22 16v3.500h-3.500z" fill={K} /></>)}</Tool>
        <Tool>{M(<><path d="M3.700 8.500h14.600v12.300H3.700z" stroke={K} strokeWidth="1.600" fill="#fff" /><path d="M6 8V6a5 5 0 0 1 10 0v2M8 8V6.500a3 3 0 0 1 6 0V8" stroke={K} /><path d="M6 14.500c3-3.500 7-3.500 10 0-3 3.500-7 3.500-10 0z" fill="#eec977" stroke={G} /><circle cx="11" cy="14.500" r="2" fill={G} /><path d="M6 12v-1.500h2M16 12v-1.500h-2M6 17.500V19h2M16 17.500V19h-2" stroke={K} /></>)}</Tool>
      </div>
    </div>
  );
}

function RightTools() {
  const eye = <><path d="M2.500 12c4.500-6.500 12.500-6.500 17 0-4.500 6.500-12.500 6.500-17 0z" stroke={K} strokeWidth="1.400" /><path d="M11 2v3M3 4l1.500 2M19 4l-1.500 2" stroke={K} strokeWidth="1.200" /></>;
  return (
    <div className="flex w-[41px] shrink-0 flex-col pl-[6px]">
      <Dots />
      <div className="flex flex-col gap-[5px]">
        <Tool>{M(<><ellipse cx="11" cy="5.500" rx="8.500" ry="4" fill={G} stroke="#8a8a8a" /><path d="M.5 11h21" stroke="#777" /><ellipse cx="11" cy="16.500" rx="8.500" ry="3.800" fill="#e6c883" /></>)}</Tool>
        <Tool>{M(<><ellipse cx="15" cy="10.500" rx="4.500" ry="7.500" transform="rotate(50 15 10.500)" fill="#666" /><ellipse cx="7" cy="10.500" rx="5" ry="9" fill={G} stroke="#999" /></>)}</Tool>
        <Tool><S w={25} h={24} vb="0 0 25 24"><path d="M0 6l6-6M0 12L12 0M0 18L18 0M0 24L24 0M6 24L25 5M12 24l13-13M18 24l7-7M0 18l6 6M0 12l12 12M0 6l18 18M0 0l24 24M6 0l19 19M12 0l13 13M18 0l7 7" stroke="#aaa" strokeWidth=".8" /><ellipse cx="12.500" cy="12" rx="5" ry="9" fill={G} stroke="#888" /></S></Tool>
      </div>
      <Dots />
      <div className="flex flex-col gap-[5px]">
        <Tool>{M(<>{eye}<circle cx="11" cy="12" r="2.500" fill={G} /></>)}</Tool>
        <Tool>{M(<>{eye}<circle cx="11" cy="12" r="3" stroke={K} strokeWidth="1.300" /><path d="M4.500 18L18 5.500" stroke={G} strokeWidth="1.800" /></>)}</Tool>
        <Tool>{M(<><path d="M1.700 2.200h14.600v14.600H1.700z" stroke="#333" strokeWidth="1.500" /><path d="M5 6h15v13H5z" fill={G} /></>)}</Tool>
        <Tool>{M(<><path d="M2 8V3h17.500v15H13" stroke={G} strokeWidth="1.300" strokeDasharray="1.500 1.300" /><path d="M1.500 11c6-2.500 11-.5 11 8M4 8.500l-3 2.500 3 1.500" stroke={K} strokeWidth="1.400" /></>)}</Tool>
      </div>
      <Dots />
      <div className="flex flex-col gap-[5px]">
        <Tool>{M(<><path d="M4 5v13h13M4 18l10-8" stroke={K} strokeWidth="1.500" /><path d="M1.800 5.500L4 2l2.200 3.500zM17 15.500l3.500 2.500-3.500 2.200zM12 8.500l4.500-1-1.500 4z" fill={G} /></>)}</Tool>
        <Tool>{M(<><rect x=".6" y="8.600" width="20.800" height="4.800" rx="2.400" stroke="#777" /><path d="M11 9H3a2 2 0 0 0 0 4h8z" fill={G} /></>)}</Tool>
        <Tool>{M(<><path d="M3 3h12l4 4v12H3z" stroke="#222" strokeWidth="1.500" /><path d="M6 7.500h9" stroke={G} strokeWidth="1.700" /><path d="M6 12h6.500M6 15.500h6.500" stroke="#222" strokeWidth="1.400" /></>)}</Tool>
        <Tool>{M(<><path d="M2.500 5H8v12H2.500z" fill={K} /><path d="M2.500 5h8v9l-3 3V7.500h-5M8 7l3-2" stroke={G} strokeWidth="1.200" /><path d="M14 9h7.500M14 13.500h7.500" stroke={K} strokeWidth="1.300" /><path d="M16 6.500L12.500 9l3.500 2.500zM16 11l-3.500 2.500L16 16z" fill={K} /></>)}</Tool>
      </div>
      <Dots />
      <div className="flex flex-col gap-[5px]">
        <Tool>{M(<><path d="M5 17V4h11" stroke={K} strokeWidth="2.200" /><path d="M8 7h9.500v12H8z" stroke={G} strokeWidth="1.300" fill="#fff" /></>)}</Tool>
        <Tool>{M(<><path d="M2.500 5.500H7L11 3l4 2.500h4.500v12h-17z" stroke={G} strokeWidth="1.300" /><circle cx="11" cy="11.500" r="3.200" fill={K} /></>)}</Tool>
      </div>
    </div>
  );
}

function Viewport() {
  return (
    <div className="relative w-[1070px] shrink-0 bg-[linear-gradient(to_bottom,#c9d1e2_0%,#d7dce9_28%,#e5e9f2_53%,#f3f5f9_78%,#ffffff_100%)]">
      <div className="flex h-[28px] items-center pr-[10px] pl-[5px] text-[13px] font-bold tracking-[-0.25px] text-[#1b2634]">
        <span className="mb-1"><Swirl /></span>
        <span className="flex-1 pr-[2px] text-center">User Window 1</span>
        <S w={11} vb="0 0 11 11"><path d="M1 1l9 9M10 1l-9 9" stroke="#111" strokeWidth="2" /></S>
      </div>
      <div className="mr-[10px] flex flex-col items-end text-black">
        <div className="mt-[17px] flex h-[46px] items-start font-['Open_Sans',sans-serif] text-[39px] leading-[46px] font-extrabold tracking-[-2.2px]">
          <S w={33} h={29} vb="0 0 33 29" className="mt-[5px] mr-[1px]"><path d="M0 28.500L11 0h10L11 19 7.500 28.500z" fill="#000" /><path d="M0 28.500L11 0h8L7.500 28.500zM17.300 6L20.500.3 33 28.500h-7.500z" fill="#000" /></S>
          <span className="-translate-y-[5px]">nsys</span>
        </div>
        <div className="-mt-[5px] font-['Inter',sans-serif] text-[19px] leading-6 font-bold tracking-[-0.8px]">2022 R2</div>
      </div>
      <svg width="90" height="105" viewBox="0 0 90 105" fill="none" className="absolute top-[543px] left-[971px]">
        <path d="M17.500 5l3.500 5 3.500-5M21 10v4" stroke="#0e0" strokeWidth="1.200" />
        <path d="M21 12l3.500 11h-7z" fill="#0a0" />
        <path d="M21 22v10" stroke="#0b0" strokeWidth="3" />
        <circle cx="21" cy="36" r="4" fill="#0c1" />
        <circle cx="21" cy="60" r="4" fill="#080" />
        <circle cx="11" cy="48" r="4.500" fill="#c00" />
        <circle cx="32" cy="48" r="4.500" fill="#d00" />
        <path d="M38 48h11" stroke="#d00" strokeWidth="3.500" />
        <path d="M47 43.500l10 4.500-10 4.500z" fill="#d00" />
        <path d="M56 43l7 11M63 43l-7 11" stroke="#f00" strokeWidth="1.100" />
        <path d="M11 37.500h21v21H11z" fill="#fff" stroke="#444" />
        <path d="M21 43a5 5 0 0 1 4 5 5 5 0 0 1-1 3l1 3h-8l1-3a5 5 0 0 1-1-3 5 5 0 0 1 4-5z" fill="#00a" />
        <circle cx="49" cy="20" r="5" fill="#00a8b0" />
        <circle cx="47.500" cy="18.500" r="1.800" fill="#5fe3e6" />
        <path d="M60 75c4-6 6.500-12 7-18h-3l4-9.500 4 10.500h-2.500c-.5 7-3 13-6.500 17z" fill="#fff" stroke="#666" strokeWidth=".9" />
        <path d="M49 84c-5 4.500-11 7-17 7.500l.5-3-10.500 5 10 4.500.5-3c8-.5 14-3.500 18-8.500z" fill="#fff" stroke="#666" strokeWidth=".9" />
      </svg>
    </div>
  );
}

/* ---------- console ---------- */
const LOG = `*********************************************************
...Loading One-way Transient Rocky-Fluent Coupling Module
... Variable Selected: Static Pressure
... /define/user-defined/function-hooks/initialization "initialize_one_way_transient_coupling::one_way_transient" "" /define/user-defined/
function-hooks/execute-at-end "write_fluent_to_rocky_files::one_way_transient" ""
...One-way Transient udfs were hooked successfully!

Your transient data will be recorded in .//fluent_to_rocky.f2r file.`;

function Console() {
  return (
    <section className="ml-[3px] flex h-[174px] flex-col bg-[#bfc4cb]">
      <div className="flex h-[27px] items-center pr-[4px] pl-[9px] text-[13px] font-bold tracking-[-0.3px] text-[#5f6f88]">
        Console
        <S w={11} vb="0 0 12 12" className="mb-[2px] ml-auto"><rect x=".6" y=".6" width="10.800" height="10.800" rx="2.500" stroke="#555" /><path d="M3 5h4v4H3zM5 5V3h4v4H7" stroke="#444" /></S>
        <S w={6} h={8} vb="0 0 6 8" className="mb-[3px] ml-[6px]"><path d="M5 .5L1 4l4 3.500" stroke="#333" strokeWidth="1.500" /></S>
      </div>
      <div className="flex h-[141px]">
        <div className="ml-px flex w-[1138px] overflow-hidden rounded-l-[2px] bg-[#f7f7f7]">
          <pre className="-mt-[2px] w-[1074px] pl-[7px] font-['Liberation_Mono',monospace] text-[13.333px] leading-4 text-black">{LOG}</pre>
          <div className="ml-[5px] flex h-[23px] w-[27px] items-center justify-center border border-[#6f7420] bg-[#eef02e]">
            <S w={16}><path d="M8 1.500l7 12.500H1z" stroke="#b99a1c" fill="#f4e93a" /><path d="M8 6v4M8 11.500v1.200" stroke="#8a7a10" strokeWidth="1.300" /></S>
          </div>
          <div className="ml-[5px] flex h-[23px] w-[27px] items-center justify-center rounded-[3px] border border-[#b9b9b9] bg-[#fcfcfc]">
            <S w={15}><circle cx="8" cy="8" r="7" stroke="#777" strokeWidth="1.200" /><path d="M8 4v5M8 10.500v1.500" stroke={G} strokeWidth="1.200" /></S>
          </div>
        </div>
        <div className="flex w-[17px] flex-col bg-[#c1c9cf]">
          <div className="flex h-[20px] items-center justify-center bg-[#a0adb6]"><S w={9} h={5} vb="0 0 8 5"><path d="M0 5h8L4 0z" fill="#5c6672" /></S></div>
          <div className="mt-[66px] h-[20px] bg-[#5a6072]" />
          <div className="flex h-[20px] items-center justify-center bg-[#a0adb6]"><S w={9} h={5} vb="0 0 8 5"><path d="M0 0h8L4 5z" fill="#5c6672" /></S></div>
          <div className="mt-px ml-[2px] flex h-[13px] w-[15px] items-center justify-center border border-[#ababab] bg-white"><S w={10} vb="0 0 10 10"><path d="M1 4.500l3 4L9 1" stroke="#222" strokeWidth="2.200" /></S></div>
        </div>
      </div>
    </section>
  );
}

/* ---------- Windows task bar ---------- */
function TaskButton({ on, active, children }) {
  return (
    <div className={'flex h-10 w-[49px] flex-col items-center ' + (active ? 'bg-[#49525c]' : '')}>
      <div className="flex h-[38px] items-center pt-[2px]">{children}</div>
      <div className={on ? (active ? 'h-[2px] w-full bg-[#76b9ed]' : 'h-[2px] w-[40px] bg-[#76b9ed]') : 'h-[2px]'} />
    </div>
  );
}

function Taskbar() {
  return (
    <footer className="flex h-10 bg-[linear-gradient(to_right,#1b232c_0%,#1c2630_45%,#182a3b_75%,#1b2733_88%,#1f252b_100%)] font-['Open_Sans',sans-serif] text-white">
      <div className="flex w-[48px] items-center justify-center"><S w={16}><path d="M0 2.300L7.300 1.300V7.600H0zM8.200 1.200L16 0v7.600H8.200zM0 8.400h7.300v6.300L0 13.700zM8.200 8.400H16V16l-7.800-1.200z" fill="#fff" /></S></div>
      <div className="flex w-[344px] items-center border border-[#a9a9a9] bg-[#f2f2f2] text-[15px] tracking-[-0.2px] text-[#444]">
        <S w={16} className="ml-[11px]"><circle cx="10" cy="6" r="5" stroke="#222" strokeWidth="1.200" /><path d="M6.500 9.500L.8 15.500" stroke="#222" strokeWidth="1.200" /></S>
        <span className="ml-[12px]">Type here to search</span>
      </div>
      <div className="flex">
        <div className="flex w-[49px] items-center justify-center pr-[2px]"><S w={16}><circle cx="8" cy="8" r="6.700" stroke="#fff" strokeWidth="1.800" /></S></div>
        <div className="flex w-[49px] items-center justify-center pr-[2px]"><S w={17} vb="0 0 17 17"><path d="M.7 0v2.500h10V0M.7 5.500h10v6H.7zM.7 17v-2.500h10V17M14.500 0v5M14.500 10.500V17" stroke="#fff" strokeWidth="1.200" /><path d="M13 6.500h3.200v2.500H13z" fill="#fff" /></S></div>
        <TaskButton on><S w={25} vb="0 0 24 24"><circle cx="12" cy="12" r="11" fill="#1283d3" /><path d="M1.500 9C3.500 3 8 1 12 1c6.500 0 11 5 11 9.500 0 4-3.500 6-6.500 6-2.500 0-3.500-1-3-2 1.500-2 .5-6.500-4.500-6.500-4 0-6.500 2-7.500 4z" fill="#35c1a0" /><path d="M14 1.300c5.500 1 9 5.200 9 9.200 0 4-3.500 6-6.500 6 2-3 3-10-2.500-15.200z" fill="#62d84e" /><path d="M9 8c-4 2-4.500 8 0 11.500 4 3 9 1.500 11.500-1-6 2.500-11-2-7-5C14.500 11 12.500 8 9 8z" fill="#0c4c94" /></S></TaskButton>
        <TaskButton on><S w={22} h={20} vb="0 0 22 20"><path d="M0 1h8l2 2.500h12V19H0z" fill="#f0b62c" /><path d="M0 5h22v14H0z" fill="#fcd56c" /><path d="M4 11h14v8h-4v-4H8v4H4z" fill="#3a96dd" /></S></TaskButton>
        <TaskButton><S w={23} vb="0 0 23 23"><path d="M7 6V2h9v4" stroke="#28a8e8" strokeWidth="2" /><path d="M0 5.500h23V20c0 2-1 3-3 3H3c-2 0-3-1-3-3z" fill="#f4f4f4" /><path d="M6.500 9h4.500v4.500H6.500z" fill="#f25022" /><path d="M12 9h4.500v4.500H12z" fill="#7fba00" /><path d="M6.500 14.500h4.500V19H6.500z" fill="#00a4ef" /><path d="M12 14.500h4.500V19H12z" fill="#ffb900" /></S></TaskButton>
        <TaskButton><S w={25} h={23} vb="0 0 25 23"><path d="M0 7L12.500 0 25 7v16H0z" fill="#0f63b5" /><path d="M1 7.500h23L12.500 17z" fill="#f3f8fd" /><path d="M0 7.500L12.500 17 25 7.500V23H0z" fill="#32a8ef" /><path d="M0 23l12.500-9L25 23z" fill="#1f8fe0" /></S></TaskButton>
        <TaskButton on><Swirl w={24} color="#a87c25" /></TaskButton>
        <TaskButton on><S w={22} vb="0 0 22 22"><rect width="22" height="22" rx="4" fill="#b30b00" /><path d="M5 16c3-1 7-6 6-11-1-2-2 1 0 4s4 5 6 4.500-4-3-11 1.500c-2 1.500-2 2-1 1z" stroke="#fff" strokeWidth="1.300" /></S></TaskButton>
        <TaskButton on active><div className="flex h-6 w-6 flex-col items-center bg-black"><Swirl w={16} /><span className="text-[9px] leading-[8px] font-bold">F</span></div></TaskButton>
        <TaskButton on><S w={25} vb="0 0 24 24"><path d="M10 5C4 5 1 10 1 14s3 9 8 9c3 0 2-3 4-4s7 0 8-4C22 9 16 5 10 5z" fill="#cfe6f5" stroke="#7fb2d6" /><circle cx="6" cy="11" r="1.800" fill="#e8453c" /><circle cx="11" cy="9" r="1.800" fill="#f2a60d" /><circle cx="5" cy="16" r="1.800" fill="#3c78d8" /><circle cx="9" cy="19.500" r="1.800" fill="#34a853" /><path d="M21 1l-5 9-5 10 8-8 4-9z" fill="#c68642" /></S></TaskButton>
      </div>
      <div className="ml-auto flex items-center pt-px text-[14.500px] tracking-[-0.4px]">
        <span className="h-[18px] w-[18px] rounded-full bg-[linear-gradient(135deg,#ffc21c,#f07c10)]" />
        <span className="ml-[11px] flex w-[90px] gap-[10px] whitespace-nowrap"><span>82°F</span><span>Sunny</span></span>
        <S w={12} h={7} vb="0 0 12 7"><path d="M.6 6.500L6 1l5.400 5.500" stroke="#fff" strokeWidth="1.300" /></S>
        <S w={13} className="ml-[12px]"><rect x="1.500" y="4" width="9" height="8" rx="1.500" stroke="#fff" strokeWidth="1.200" /><path d="M10.500 7L14 5v6l-3.500-2M2.500 2C5 0 8 0 10.500 2M2.500 14c2.500 2 5.500 2 8 0" stroke="#fff" strokeWidth="1.200" /></S>
        <S w={17} className="ml-[8px]"><path d="M3.500 12A3.300 3.300 0 0 1 3 5.500C4.500 1.500 9.500 1.500 11 5c3.500 0 4 3 3.500 7z" fill="#1b82d6" /><circle cx="11.500" cy="10.500" r="4.500" fill="#d92b2b" /><path d="M9.700 8.700l3.600 3.600M13.300 8.700l-3.600 3.600" stroke="#fff" strokeWidth="1.300" /></S>
        <S w={16} className="ml-[7px]"><path d="M5 3.500h10.500v8H5M8 14.500h5M10.500 11.500v3M.6 1.500h4v4h-4zM2.500 5.500v8.500h4" stroke="#fff" /></S>
        <S w={17} vb="0 0 17 16" className="ml-[8px]"><path d="M.6 5.500h3l4-4v13l-4-4h-3z" stroke="#fff" /><path d="M9.500 5.500c1.200 1.500 1.200 3.500 0 5M11.800 3.500c2.200 2.500 2.200 6.500 0 9" stroke="#ddd" /><path d="M14 2c3 3.500 3 8.500 0 12" stroke="#777" /></S>
        <span className="ml-[9px] w-[28px] text-[12px]">ENG</span>
        <div className="ml-[6px] flex w-[56px] flex-col items-center text-[12px] leading-[18px] whitespace-nowrap"><span>8:14 PM</span><span>8/23/2022</span></div>
        <div className="relative ml-[16px] h-[24px] w-[27px]">
          <S w={18} vb="0 0 18 18" className="mt-[2px]"><path d="M1 1h16v12h-8l-3 4v-4H1z" fill="#fff" /><path d="M4 4.500h10M4 7.200h10M4 10h10" stroke="#1f252b" strokeWidth="1.200" /></S>
          <span className="absolute top-[8px] left-[8px] flex h-[17px] w-[17px] items-center justify-center rounded-full border border-[#8a8f94] bg-[#33383d] text-[11px] leading-none font-semibold">9</span>
        </div>
        <span className="mr-[4px] ml-[9px] h-10 w-px bg-[#5c646c]" />
      </div>
    </footer>
  );
}

export default function App() {
  return (
    <div className={'flex h-[1080px] w-[1920px] flex-col overflow-hidden bg-white ' + TAHOMA}>
      <Header />
      <Ribbon />
      <div className="flex h-[870px] pt-[3px]">
        <Outline />
        <TaskPage />
        <div className="flex flex-1 flex-col">
          <div className="flex h-[650px]">
            <LeftTools />
            <Viewport />
            <RightTools />
          </div>
          <div className="flex h-[43px] items-center pr-[5px] pl-[8px] text-[13px] tracking-[-0.35px] text-black">
            <S w={5} h={17} vb="0 0 5 17" className="mt-[5px]"><path d="M.5 0v17M4 0v17" stroke="#a9a9a9" strokeDasharray="1 2" /></S>
            <span className="mt-[5px] ml-auto">0 selected</span>
            <span className="mt-[6px] ml-[3px] flex h-[23px] w-[166px] items-center justify-between rounded-[4px] border border-[#b5c2d2] bg-[#fdfdfd] pt-px pr-[8px] pl-[5px]">all<Caret className="mb-1" /></span>
          </div>
          <Console />
        </div>
      </div>
      <Taskbar />
    </div>
  );
}
